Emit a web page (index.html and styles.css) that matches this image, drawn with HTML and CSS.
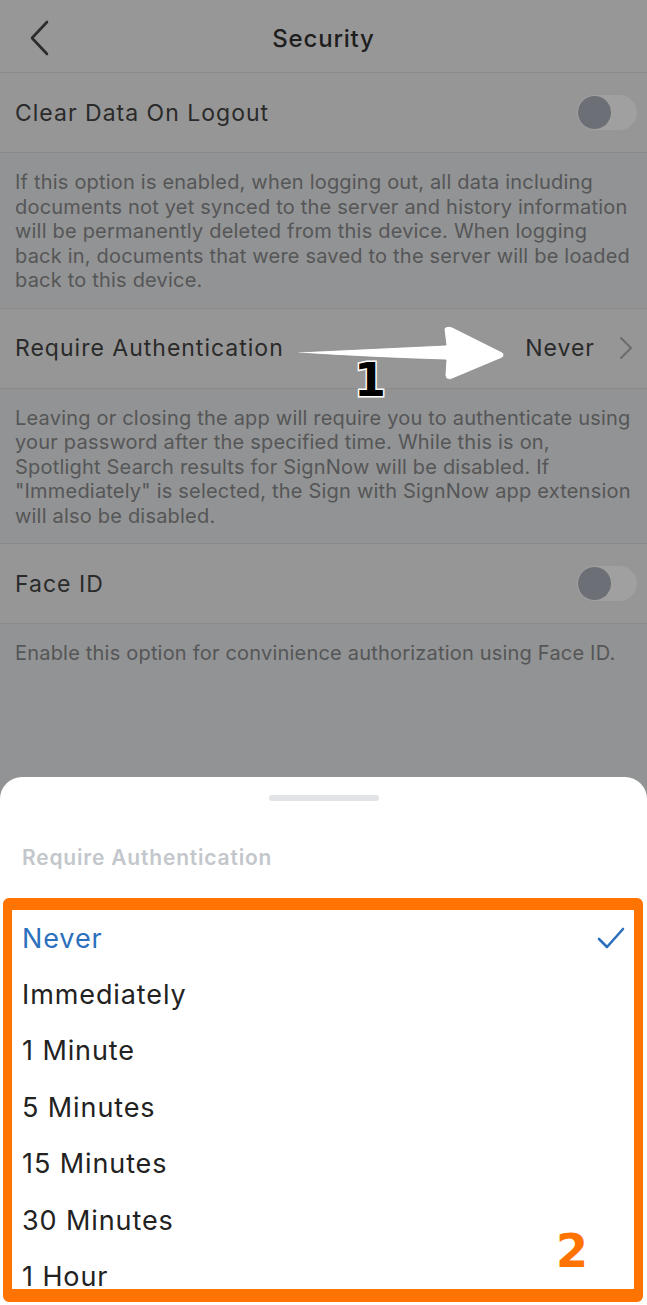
FILE: index.html
```html
<!DOCTYPE html>
<html lang="en">
<head>
  <meta charset="UTF-8">
  <meta name="viewport" content="width=device-width, initial-scale=1.0">
  <title>Security</title>
  <link rel="stylesheet" href="styles.css">
</head>
<body>

  <!-- Schermata impostazioni (oscurata dal foglio modale) -->
  <div class="screen">
    <div class="topbar">
      <svg class="back" width="22" height="36" viewBox="0 0 22 36">
        <path d="M19 2 L4 18 L19 34" fill="none" stroke="#2b2b2b" stroke-width="2.6" stroke-linecap="round" stroke-linejoin="round"/>
      </svg>
      <div class="title">Security</div>
    </div>

    <div class="row">
      <span class="label">Clear Data On Logout</span>
      <span class="toggle"><span class="knob"></span></span>
    </div>
    <div class="note">
      If this option is enabled, when logging out, all data including documents not yet synced to the server and history information will be permanently deleted from this device. When logging back in, documents that were saved to the server will be loaded back to this device.
    </div>

    <div class="row row-auth">
      <span class="label">Require Authentication</span>
      <span class="value">Never
        <svg class="chev" width="14" height="24" viewBox="0 0 14 24">
          <path d="M2 2 L12 12 L2 22" fill="none" stroke="#6c6c6c" stroke-width="2" stroke-linecap="round" stroke-linejoin="round"/>
        </svg>
      </span>

      <!-- Annotazione: freccia e numero 1 -->
      <svg class="arrow" width="220" height="60" viewBox="0 0 220 60">
        <path d="M2 27 L150 20 L148 4 Q150 0 156 2 L206 27 Q210 30 206 33 L156 54 Q150 56 149 50 L150 35 Q80 33 2 28 Z" fill="#ffffff" stroke="#8a8a8a" stroke-width="0.8"/>
      </svg>
      <span class="badge badge-1">1</span>
    </div>
    <div class="note">
      Leaving or closing the app will require you to authenticate using your password after the specified time. While this is on, Spotlight Search results for SignNow will be disabled. If "Immediately" is selected, the Sign with SignNow app extension will also be disabled.
    </div>

    <div class="row">
      <span class="label">Face ID</span>
      <span class="toggle"><span class="knob"></span></span>
    </div>
    <div class="note">
      Enable this option for convinience authorization using Face ID.
    </div>
  </div>

  <!-- Foglio modale in basso -->
  <div class="sheet">
    <div class="handle"></div>
    <div class="sheet-title">Require Authentication</div>

    <div class="highlight">
      <div class="options">
        <div class="option selected">
          <span>Never</span>
          <svg width="28" height="22" viewBox="0 0 28 22">
            <path d="M2 12 L10 20 L26 2" fill="none" stroke="#2c6fbd" stroke-width="2.6" stroke-linecap="round" stroke-linejoin="round"/>
          </svg>
        </div>
        <div class="option">Immediately</div>
        <div class="option">1 Minute</div>
        <div class="option">5 Minutes</div>
        <div class="option">15 Minutes</div>
        <div class="option">30 Minutes</div>
        <div class="option">1 Hour</div>
      </div>
      <span class="badge badge-2">2</span>
    </div>
  </div>

</body>
</html>
```

FILE: styles.css
```css
/* Base */
body {
  margin: 0;
  width: 647px;
  height: 1305px;
  overflow: hidden;
  background-color: #929394;
  font-family: 'Inter', 'Noto Sans', sans-serif;
  color: #262626;
}

/* Schermata oscurata */
.screen {
  height: 777px;
  background-color: #929394;
}

.topbar {
  height: 72px;
  display: flex;
  align-items: center;
  justify-content: center;
  position: relative;
  background-color: #979797;
  border-bottom: 1px solid #8a8a8a;
}

.back {
  position: absolute;
  left: 28px;
  top: 20px;
}

.title {
  font-size: 24px;
  font-weight: 500;
  letter-spacing: 0.8px;
  color: #1e1e1e;
  padding-top: 4px;
}

.row {
  height: 79px;
  padding: 0 10px 0 15px;
  display: flex;
  align-items: center;
  justify-content: space-between;
  background-color: #969696;
  border-bottom: 1px solid #8a8a8a;
  position: relative;
}

.label {
  font-size: 23px;
  letter-spacing: 1px;
  color: #2a2a2a;
}

.value {
  display: flex;
  align-items: center;
  gap: 24px;
  font-size: 23px;
  letter-spacing: 1px;
  color: #2a2a2a;
  padding-right: 4px;
}

/* Interruttore spento */
.toggle {
  width: 59px;
  height: 35px;
  border-radius: 18px;
  background-color: #a0a0a0;
  display: flex;
  align-items: center;
  padding-left: 1px;
}

.knob {
  width: 33px;
  height: 33px;
  border-radius: 50%;
  background-color: #6c6f75;
}

.note {
  padding: 17px 14px 15px 15px;
  font-size: 20px;
  line-height: 24.5px;
  letter-spacing: 0.2px;
  color: #555657;
  border-bottom: 1px solid #8a8a8a;
}

.note:last-child {
  border-bottom: none;
}

/* Annotazioni */
.arrow {
  position: absolute;
  left: 296px;
  top: 16px;
}

.badge {
  position: absolute;
  font-family: 'DejaVu Sans', sans-serif;
  font-weight: bold;
  line-height: 1;
}

.badge-1 {
  left: 354px;
  top: 48px;
  font-size: 46px;
  color: #000;
  -webkit-text-stroke: 3px #fff;
  paint-order: stroke fill;
}

.badge-2 {
  right: 46px;
  bottom: 15px;
  font-size: 46px;
  color: #ff7300;
  -webkit-text-stroke: 4px #fff;
  paint-order: stroke fill;
}

/* Foglio modale */
.sheet {
  height: 528px;
  background-color: #fff;
  border-radius: 22px 22px 0 0;
  padding-top: 18px;
  box-sizing: border-box;
}

.handle {
  width: 110px;
  height: 6px;
  border-radius: 3px;
  background-color: #e1e3e6;
  margin: 0 auto;
}

.sheet-title {
  margin-top: 44px;
  padding-left: 22px;
  font-size: 21px;
  font-weight: 600;
  letter-spacing: 0.8px;
  color: #c3c7cc;
}

.highlight {
  position: relative;
  margin: 28px 4px 0 3px;
  height: 404px;
  box-sizing: border-box;
  border: 9px solid #ff7300;
  border-top-width: 12px;
  border-bottom-width: 13px;
  border-radius: 6px;
  overflow: hidden;
}

.options {
  padding: 0 9px 0 10px;
}

.option {
  height: 56.4px;
  display: flex;
  align-items: center;
  justify-content: space-between;
  font-size: 27px;
  letter-spacing: 0.9px;
  color: #222;
}

.option.selected {
  color: #2c6fbd;
}
```
